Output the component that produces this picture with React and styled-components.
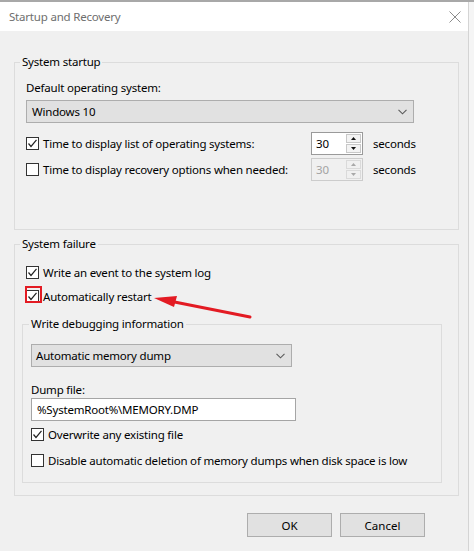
import React from 'react';
import styled, { createGlobalStyle } from 'styled-components';

const Global = createGlobalStyle`
  html, body { margin: 0; padding: 0; background: #f5f5f5; }
  body { font-family: "Noto Sans", "Open Sans", sans-serif; font-size: 11.5px; letter-spacing: -0.2px; color: #000; }
  #root { width: 474px; height: 551px; overflow: hidden; }
  * { box-sizing: border-box; }
`;

const Frame = styled.div`
  position: relative;
  width: 474px;
  height: 551px;
  display: flex;
  flex-direction: column;
  overflow: hidden;
`;

const TopStrip = styled.div`
  flex: none;
  height: 2px;
  background: #a8a8a8;
`;

const Window = styled.div`
  flex: 1;
  width: 469px;
  display: flex;
  flex-direction: column;
  background: #f0f0f0;
  border-right: 1px solid #d4d4d4;
`;

const TitleBar = styled.div`
  flex: none;
  height: 29px;
  background: #fff;
  display: flex;
  align-items: center;
  justify-content: space-between;
  padding: 0 7px 0 9px;
`;

const Title = styled.span`
  color: #6e6e6e;
  font-size: 11.5px;
`;

const Body = styled.div`
  flex: 1;
  display: flex;
  flex-direction: column;
  padding: 23px 9px 0 14px;
`;

const Group = styled.fieldset`
  margin: ${p => p.$margin || '0'};
  padding: ${p => p.$pad};
  border: 1px solid #dcdcdc;
  height: ${p => p.$h}px;
  width: ${p => (p.$w ? `${p.$w}px` : 'auto')};
  min-width: 0;
  display: flex;
  flex-direction: column;
`;

const Legend = styled.legend`
  margin-left: ${p => p.$ml}px;
  padding: 0 2px;
  line-height: 16px;
  height: 16px;
`;

const Label = styled.div`
  line-height: 15px;
  margin-top: ${p => p.$mt || 0}px;
`;

const Select = styled.div`
  width: ${p => p.$w}px;
  height: 23px;
  margin-top: ${p => p.$mt || 0}px;
  background: #e1e1e1;
  border: 1px solid #adadad;
  display: flex;
  align-items: center;
  justify-content: space-between;
  padding: 0 6px 0 ${p => p.$pl || 5}px;
`;

const TextInput = styled.div`
  width: ${p => p.$w}px;
  height: 23px;
  margin-top: ${p => p.$mt || 0}px;
  background: #fff;
  border: 1px solid #a5a5a5;
  display: flex;
  align-items: center;
  padding: 0 5px;
`;

const TimeRows = styled.div`
  display: grid;
  grid-template-columns: 275px 52px auto;
  grid-auto-rows: 23px;
  column-gap: 10px;
  row-gap: 3px;
  align-items: center;
  margin-top: 9px;
`;

const CheckRow = styled.label`
  display: flex;
  align-items: center;
  gap: 4px;
  height: 17px;
  margin-top: ${p => p.$mt || 0}px;
  white-space: nowrap;
`;

const BoxWrap = styled.span`
  position: relative;
  flex: none;
  width: 13px;
  height: 13px;
`;

const Box = styled.span`
  display: block;
  width: 13px;
  height: 13px;
  border: 1px solid #333;
  background: #fff;
`;

const Highlight = styled.span`
  position: absolute;
  left: -1px;
  top: -4px;
  width: 17px;
  height: 17px;
  border: 2px solid #e31b23;
  pointer-events: none;
`;

const Spin = styled.div`
  height: 23px;
  display: flex;
  align-items: stretch;
  background: ${p => (p.$disabled ? '#f0f0f0' : '#fff')};
  border: 1px solid ${p => (p.$disabled ? '#cccccc' : '#9a9a9a')};
  color: ${p => (p.$disabled ? '#a3a3a3' : '#000')};
`;

const SpinValue = styled.span`
  flex: 1;
  display: flex;
  align-items: center;
  padding-left: 4px;
`;

const SpinButtons = styled.div`
  width: 16px;
  display: flex;
  flex-direction: column;
  gap: 1px;
  padding: 1px 1px 1px 0;
`;

const SpinBtn = styled.span`
  flex: 1;
  display: flex;
  align-items: center;
  justify-content: center;
  background: ${p => (p.$disabled ? '#f0f0f0' : '#f3f3f3')};
  border: 1px solid ${p => (p.$disabled ? '#dadada' : '#c8c8c8')};
`;

const Unit = styled.span`
  white-space: nowrap;
`;

const Buttons = styled.div`
  display: flex;
  justify-content: flex-end;
  gap: 8px;
  margin-top: 17px;
  padding-right: 34px;
`;

const Button = styled.button`
  width: 85px;
  height: 24px;
  background: #e1e1e1;
  border: 1px solid #adadad;
  font: inherit;
  color: #000;
  padding: 0;
`;

const ArrowSvg = styled.svg`
  position: absolute;
  left: 0;
  top: 0;
  pointer-events: none;
`;

const Chevron = () => (
  <svg width="9" height="6" viewBox="0 0 9 6">
    <polyline points="0.5,0.8 4.5,4.8 8.5,0.8" fill="none" stroke="#5a5a5a" strokeWidth="1.1" />
  </svg>
);

const Close = () => (
  <svg width="12" height="12" viewBox="0 0 12 12">
    <path d="M0.5 0.5 L11.5 11.5 M11.5 0.5 L0.5 11.5" stroke="#8c8c8c" strokeWidth="1" />
  </svg>
);

const Tri = ({ up, color }) => (
  <svg width="5" height="3" viewBox="0 0 5 3">
    <polygon points={up ? '0,3 2.5,0 5,3' : '0,0 2.5,3 5,0'} fill={color} />
  </svg>
);

const Check = ({ checked, highlight }) => (
  <BoxWrap>
    <Box>
      {checked && (
        <svg width="11" height="11" viewBox="0 0 11 11" style={{ display: 'block' }}>
          <polyline points="1.5,5.5 4,8.5 9.5,1.8" fill="none" stroke="#222" strokeWidth="1.2" />
        </svg>
      )}
    </Box>
    {highlight && <Highlight />}
  </BoxWrap>
);

const SpinBox = ({ value, disabled }) => {
  const c = disabled ? '#a8a8a8' : '#111';
  return (
    <Spin $disabled={disabled}>
      <SpinValue>{value}</SpinValue>
      <SpinButtons>
        <SpinBtn $disabled={disabled}><Tri up color={c} /></SpinBtn>
        <SpinBtn $disabled={disabled}><Tri color={c} /></SpinBtn>
      </SpinButtons>
    </Spin>
  );
};

export default function App() {
  return (
    <>
      <Global />
      <Frame>
        <TopStrip />
        <Window>
          <TitleBar>
            <Title>Startup and Recovery</Title>
            <Close />
          </TitleBar>
          <Body>
            <Group $h={176} $pad="10px 10px 0 11px">
              <Legend $ml={-6}>System startup</Legend>
              <Label>Default operating system:</Label>
              <Select $w={388} $mt={5}>
                <span>Windows 10</span>
                <Chevron />
              </Select>
              <TimeRows>
                <CheckRow>
                  <Check checked />
                  Time to display list of operating systems:
                </CheckRow>
                <SpinBox value="30" />
                <Unit>seconds</Unit>
                <CheckRow>
                  <Check />
                  Time to display recovery options when needed:
                </CheckRow>
                <SpinBox value="30" disabled />
                <Unit>seconds</Unit>
              </TimeRows>
            </Group>

            <Group $h={260} $pad="12px 10px 0 11px" $margin="6px 0 0 0">
              <Legend $ml={-6}>System failure</Legend>
              <CheckRow>
                <Check checked />
                Write an event to the system log
              </CheckRow>
              <CheckRow $mt={7}>
                <Check checked highlight />
                Automatically restart
              </CheckRow>
              <Group $h={167} $w={420} $pad="12px 8px 0 8px" $margin="11px 0 0 -4px">
                <Legend $ml={-2}>Write debugging information</Legend>
                <Select $w={261} $pl={4}>
                  <span>Automatic memory dump</span>
                  <Chevron />
                </Select>
                <Label $mt={15}>Dump file:</Label>
                <TextInput $w={265} $mt={1}>%SystemRoot%\MEMORY.DMP</TextInput>
                <CheckRow $mt={5}>
                  <Check checked />
                  Overwrite any existing file
                </CheckRow>
                <CheckRow $mt={9}>
                  <Check />
                  Disable automatic deletion of memory dumps when disk space is low
                </CheckRow>
              </Group>
            </Group>

            <Buttons>
              <Button>OK</Button>
              <Button>Cancel</Button>
            </Buttons>
          </Body>
        </Window>
        <ArrowSvg width="474" height="551" viewBox="0 0 474 551">
          <line x1="250" y1="317" x2="172" y2="301.5" stroke="#e31b23" strokeWidth="3" strokeLinecap="round" />
          <polygon points="154,298 177,296 174,307" fill="#e31b23" />
        </ArrowSvg>
      </Frame>
    </>
  );
}
